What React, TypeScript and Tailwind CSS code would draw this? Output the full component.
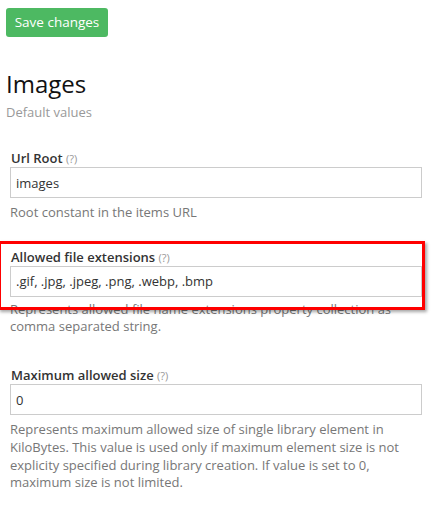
import React from "react";

function Field({
  label,
  value,
  help,
  className,
  helpClass,
  children,
}: {
  label: string;
  value: string;
  help: React.ReactNode;
  className?: string;
  helpClass?: string;
  children?: React.ReactNode;
}) {
  return (
    <div className={"relative w-[412px] ml-[4px] " + (className ?? "")}>
      {children}
      <div className="text-[13px] leading-[18px] h-[18px] font-semibold text-[#333] pl-px">
        {label} <span className="font-normal text-[11px] text-[#999]">(?)</span>
      </div>
      <input
        readOnly
        value={value}
        className="block w-[412px] h-[31px] border border-[#cccccc] bg-white pl-[5px] text-[13px] text-[#333] outline-none font-['Open_Sans',sans-serif]"
      />
      <div className={"text-[13px] leading-[17.7px] text-[#777] " + (helpClass ?? "mt-[6px]")}>{help}</div>
    </div>
  );
}

export default function App() {
  return (
    <div className="relative min-h-[526px] w-[435px] bg-white font-['Open_Sans',sans-serif] pl-[6px] overflow-hidden">
      <button className="mt-[8px] h-[29px] w-[102px] rounded-[3px] bg-[#4db962] text-white text-[13.5px] leading-[29px] font-normal">
        Save changes
      </button>
      <h1 className="mt-[34px] text-[24px] leading-[26px] text-[#111] font-normal">Images</h1>
      <div className="mt-[6px] text-[13px] leading-[18px] text-[#999]">Default values</div>

      <Field
        className="mt-[28px]"
        label="Url Root"
        value="images"
        help="Root constant in the items URL"
      />
      <Field
        className="mt-[26px]"
        helpClass="mt-[4px]"
        label="Allowed file extensions"
        value=".gif, .jpg, .jpeg, .png, .webp, .bmp"
        help={
          <>
            Represents allowed file name extensions property collection as
            <br />
            comma separated string.
          </>
        }
      >
        <div className="absolute z-10 top-[-7px] left-[-12px] w-[427px] h-[69px] border-[3px] border-[#ff0000] shadow-[2px_2px_3px_rgba(0,0,0,0.35)] pointer-events-none" />
      </Field>
      <Field
        className="mt-[30px]"
        label="Maximum allowed size"
        value="0"
        help={
          <>
            Represents maximum allowed size of single library element in
            <br />
            KiloBytes. This value is used only if maximum element size is not
            <br />
            explicity specified during library creation. If value is set to 0,
            <br />
            maximum size is not limited.
          </>
        }
      />
    </div>
  );
}
